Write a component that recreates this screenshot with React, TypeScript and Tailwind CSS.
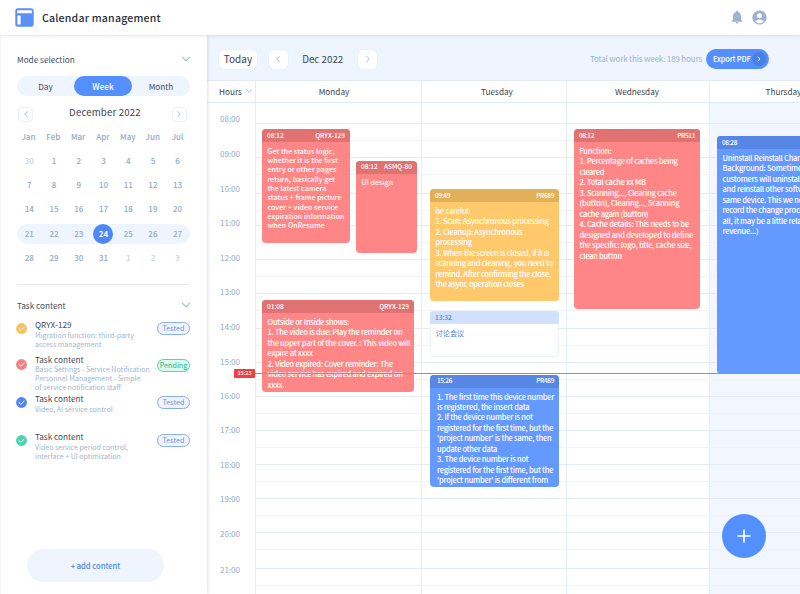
import React from 'react';
import clsx from 'clsx';
import { ChevronDown, ChevronLeft, ChevronRight } from 'lucide-react';
import { MdAccountCircle, MdNotifications } from 'react-icons/md';

type Tone = 'red' | 'yellow' | 'blue' | 'plain';

interface CalendarEvent {
  time: string;
  code?: string;
  lines: string[];
  tone: Tone;
  left: number;
  top: number;
  width: number;
  height: number;
  text: string;
  head?: string;
}

const toneBody: Record<Tone, string> = {
  red: 'bg-[#ff8080]/95 text-white',
  yellow: 'bg-[#ffc563]/95 text-white',
  blue: 'bg-[#5c94ff]/95 text-white',
  plain: 'bg-white text-[#4a84dd] ring-1 ring-inset ring-[#edf2f9]',
};

const toneHead: Record<Tone, string> = {
  red: 'bg-[#e07272]',
  yellow: 'bg-[#e2b05b]',
  blue: 'bg-[#5687e4]',
  plain: 'bg-[#d1e0ff]',
};

const compactText = 'text-[7px] leading-[9.35px] tracking-[0.07px] font-medium pt-[0.5px]';
const bodyText = 'text-[7.5px] leading-[10.45px] tracking-[-0.24px] font-medium';

const weekDays = ['Jan', 'Feb', 'Mar', 'Apr', 'May', 'Jun', 'Jul'];

const weeks = [
  [30, 1, 2, 3, 4, 5, 6],
  [7, 8, 9, 10, 11, 12, 13],
  [14, 15, 16, 17, 18, 19, 20],
  [21, 22, 23, 24, 25, 26, 27],
  [28, 29, 30, 31, 1, 2, 3],
];

const tasks = [
  {
    title: 'QRYX-129',
    lines: ['Migration function: third-party', 'access management'],
    color: 'text-[#f8c160]',
    status: 'Tested',
    row: 'h-[35px]',
    pill: 'mt-[3px]',
    leading: 'leading-[9.5px] pt-px',
  },
  {
    title: 'Task content',
    lines: ['Basic Settings - Service Notification', 'Personnel Management - Simple', 'of service notification staff'],
    color: 'text-[#f58080]',
    status: 'Pending',
    row: 'h-[39px]',
    pill: 'mt-[5px]',
    leading: 'leading-[8.8px]',
  },
  {
    title: 'Task content',
    lines: ['Video, AI service control'],
    color: 'text-[#4f86f0]',
    status: 'Tested',
    row: 'h-[38px]',
    pill: 'mt-[3px]',
    leading: 'leading-[9.5px] pt-px',
  },
  {
    title: 'Task content',
    lines: ['Video service period control,', 'interface + UI optimization'],
    color: 'text-[#49d3b0]',
    status: 'Tested',
    row: 'h-[38px]',
    pill: 'mt-[3px]',
    leading: 'leading-[9.3px] pt-px',
  },
];

const hours = [
  { label: '08:00', y: 119 },
  { label: '09:00', y: 154 },
  { label: '10:00', y: 189 },
  { label: '11:00', y: 223 },
  { label: '12:00', y: 258 },
  { label: '13:00', y: 292 },
  { label: '14:00', y: 327 },
  { label: '15:00', y: 362 },
  { label: '16:00', y: 396 },
  { label: '17:00', y: 430 },
  { label: '18:00', y: 465 },
  { label: '19:00', y: 499 },
  { label: '20:00', y: 534 },
  { label: '21:00', y: 570 },
];

const hourLines = [123, 157, 193, 225, 259, 293, 328, 362, 396, 430, 464, 498, 532, 568];

// top of the scrolling grid in page coordinates
const GRID_TOP = 103;

const days: { name: string; cell: string; column: string; events: CalendarEvent[] }[] = [
  {
    name: 'Monday',
    cell: 'w-[166px] pr-[9px]',
    column: 'w-[166px]',
    events: [
      {
        time: '08:12', code: 'QRYX-129', tone: 'red', left: 7, top: 129, width: 88, height: 114,
        text: compactText,
        lines: ['Get the status logic,', 'whether it is the first', 'entry or other pages', 'return, basically get', 'the latest camera', 'status + frame picture', 'cover + video service', 'expiration information', 'when OnResume'],
      },
      {
        time: '08:12', code: 'ASMQ-80', tone: 'red', left: 101, top: 160.5, width: 61, height: 92,
        text: compactText,
        head: 'px-1',
        lines: ['UI design'],
      },
      {
        time: '01:08', code: 'QRYX-129', tone: 'red', left: 7, top: 300, width: 152, height: 91.5,
        text: bodyText,
        lines: ['Outside or Inside shows:', '1. The video is due: Play the reminder on', 'the upper part of the cover. : This video will', 'expire at xxxx', '2. Video expired: Cover reminder: The', 'video service has expired and expired on', 'xxxx.'],
      },
    ],
  },
  {
    name: 'Tuesday',
    cell: 'w-[145px] pl-1.5',
    column: 'w-[145px]',
    events: [
      {
        time: '09:49', code: 'PR689', tone: 'yellow', left: 9, top: 189, width: 129, height: 112,
        text: bodyText,
        head: 'tracking-[-0.35px]',
        lines: ['be careful:', '1. Scan: Asynchronous processing', '2. Cleanup: Asynchronous', 'processing', '3. When the screen is closed, if it is', 'scanning and cleaning, you need to', 'remind. After confirming the close,', 'the async operation closes'],
      },
      {
        time: '13:32', tone: 'plain', left: 9, top: 311, width: 129, height: 46,
        text: 'text-[7.2px] leading-[10.45px]',
        lines: ['讨论会议'],
      },
      {
        time: '15:26', code: 'PR489', tone: 'blue', left: 9, top: 374.5, width: 129, height: 112,
        text: 'text-[7.5px] leading-[10.45px] tracking-[-0.24px] font-medium pl-[1.5px]',
        head: 'tracking-[-0.35px] pl-[7px]',
        lines: ['1. The first time this device number', 'is registered, the insert data', '2. If the device number is not', 'registered for the first time, but the', "'project number' is the same, then", 'update other data', '3. The device number is not', 'registered for the first time, but the', "'project number' is different from"],
      },
    ],
  },
  {
    name: 'Wednesday',
    cell: 'w-[143px] pr-[2px]',
    column: 'w-[143px]',
    events: [
      {
        time: '08:12', code: 'PR511', tone: 'red', left: 8, top: 129, width: 126, height: 180,
        text: bodyText,
        head: 'tracking-[-0.35px]',
        lines: ['Function:', '1. Percentage of caches being', 'cleared', '2. Total cache xx MB', '3. Scanning..., Clearing cache', '(button), Clearing..., Scanning', 'cache again (button)', '4. Cache details: This needs to be', 'designed and developed to define', 'the specific: logo, title, cache size,', 'clean button'],
      },
    ],
  },
  {
    name: 'Thursday',
    cell: 'w-[145px] pl-[3px]',
    column: 'w-[145px] bg-[#f1f6ff]',
    events: [
      {
        time: '08:28', tone: 'blue', left: 8, top: 136, width: 130, height: 238,
        text: bodyText,
        head: 'tracking-[-0.35px]',
        lines: ['Uninstall Reinstall Changes', 'Background: Sometimes', 'customers will uninstall', 'and reinstall other software', 'same device. This we need', 'record the change process', 'all, it may be a little related', 'revenue...)'],
      },
    ],
  },
];

const CheckDot: React.FC<{ className: string }> = ({ className }) => (
  <svg viewBox="0 0 11 11" className={clsx('size-[11px] shrink-0', className)}>
    <circle cx="5.5" cy="5.5" r="5.4" fill="currentColor" />
    <path d="M3 5.6 L4.9 7.3 L8.1 4.2" fill="none" stroke="#fff" strokeWidth="1" strokeLinecap="round" strokeLinejoin="round" />
  </svg>
);

const Header: React.FC = () => (
  <header className="relative z-20 flex h-[35px] items-center justify-between bg-white pl-[15px] pr-[32px] shadow-[0_1px_3px_rgba(100,130,180,0.2)]">
    <div className="flex items-center">
      <svg viewBox="0 0 19 19" className="size-[19px]">
        <rect x="0.3" y="0.3" width="18.4" height="18.4" rx="2.6" fill="#5a8ff8" />
        <rect x="2.2" y="2.3" width="14.6" height="3" rx="0.3" fill="#fff" />
        <rect x="2.4" y="7.6" width="3.2" height="9" rx="0.3" fill="#fff" />
      </svg>
      <h1 className="ml-2 text-[10.5px] font-medium tracking-[0.22px] text-[#262e3c]">Calendar management</h1>
    </div>
    <div className="flex items-center gap-[6.5px] pb-px text-[#9db3d0]">
      <MdNotifications className="size-4" />
      <MdAccountCircle className="size-[17px]" />
    </div>
  </header>
);

const NavButton: React.FC<{ dir: 'left' | 'right'; className: string; icon: string }> = ({ dir, className, icon }) => {
  const Icon = dir === 'left' ? ChevronLeft : ChevronRight;
  return (
    <button className={clsx('flex items-center justify-center bg-white text-[#9db6d3]', className)}>
      <Icon className={icon} strokeWidth={2.2} />
    </button>
  );
};

const Sidebar: React.FC = () => (
  <aside className="relative z-10 flex w-[207px] shrink-0 flex-col border-l border-[#f4f6f9] bg-white pl-4 pr-[17px] shadow-[1px_0_3px_rgba(100,110,130,0.22)]">
    <div className="mt-[18px] flex h-3 items-center justify-between">
      <span className="text-[8.2px] text-[#434c5b]">Mode selection</span>
      <ChevronDown className="-mr-[3px] size-3.5 text-[#8fabcf]" strokeWidth={1.8} />
    </div>

    <div className="mt-[11px] flex h-5 rounded-full bg-[#eef5ff] text-[8.2px] text-[#434c5b]">
      <button className="w-[57px]">Day</button>
      <button className="w-[58px] rounded-full bg-[#5490fd] font-medium text-white">Week</button>
      <button className="w-[58px]">Month</button>
    </div>

    <div className="mt-2.5 flex h-4 items-center justify-between pl-px pr-[3px]">
      <NavButton dir="left" className="size-[15px] rounded border border-[#edf1f6]" icon="size-2.5" />
      <span className="pb-1 pl-[5px] text-[9.6px] tracking-[0.2px] text-[#3a4352]">December 2022</span>
      <NavButton dir="right" className="size-[15px] rounded border border-[#edf1f6]" icon="size-2.5" />
    </div>

    <div className="mt-[9px] text-[8px] font-medium text-[#93aac5]">
      <div className="-ml-[1px] grid h-[12px] w-[174px] grid-cols-7 items-center text-center">
        {weekDays.map((d) => (
          <span key={d}>{d}</span>
        ))}
      </div>
      <div className="mt-2">
        {weeks.map((week, w) => (
          <div
            key={w}
            className={clsx(
              'mb-[4.2px] grid h-5 w-[173px] grid-cols-7 items-center rounded-full text-center',
              w === 3 && 'bg-[#eef5ff]'
            )}
          >
            {week.map((n, i) => {
              const outside = (w === 0 && i === 0) || (w === 4 && i > 3);
              const active = w === 3 && n === 24;
              return (
                <span
                  key={i}
                  className={clsx(
                    active && 'mx-auto flex size-5 items-center justify-center rounded-full bg-[#4f87f5] font-bold text-white',
                    outside && 'text-[#c9d5e4]'
                  )}
                >
                  {n}
                </span>
              );
            })}
          </div>
        ))}
      </div>
    </div>

    <div className="mt-3 h-px bg-[#e6eaf0]" />

    <div className="mt-3.5 flex h-3 items-center justify-between">
      <span className="text-[8.2px] text-[#434c5b]">Task content</span>
      <ChevronDown className="-mr-[3px] size-3.5 text-[#8fabcf]" strokeWidth={1.8} />
    </div>

    <div className="mt-2">
      {tasks.map((task, i) => (
        <div key={i} className={clsx('flex items-start', task.row)}>
          <CheckDot className={clsx('-ml-[1px]', i === 1 ? 'mt-[5px]' : 'mt-[4px]', task.color)} />
          <div className="ml-2 flex-1 whitespace-nowrap">
            <div className="text-[8.2px] leading-[11px] text-[#434c5b]">{task.title}</div>
            <div className={clsx('text-[7px] text-[#a3b5cb]', task.leading)}>
              {task.lines.map((l) => (
                <div key={l}>{l}</div>
              ))}
            </div>
          </div>
          <span
            className={clsx(
              'flex h-[13px] w-[33px] shrink-0 items-center justify-center rounded-full border text-[7.2px]',
              task.pill,
              task.status === 'Pending'
                ? 'border-[#62cfae] bg-[#d8fbef] text-[#38ab88]'
                : 'border-[#88b0e8] bg-[#edf4ff] text-[#6b98dc]'
            )}
          >
            {task.status}
          </span>
        </div>
      ))}
    </div>

    <button className="absolute bottom-3 left-[26px] h-[33px] w-[137px] rounded-full bg-[#eef5ff] text-[7.6px] font-medium text-[#4f87d6]">
      + add content
    </button>
  </aside>
);

const Toolbar: React.FC = () => (
  <div className="flex h-[45px] shrink-0 items-center bg-[#eef5ff] pl-3 pt-[3px]">
    <button className="h-[19px] w-[38px] rounded-[5px] bg-white pb-0.5 text-[10px] text-[#3a4352] shadow-[0_0_1px_rgba(150,170,200,0.4)]">Today</button>
    <NavButton dir="left" className="ml-[11.5px] size-[19px] rounded-[5px] shadow-[0_0_1px_rgba(150,170,200,0.4)]" icon="size-2.5" />
    <span className="w-[70.5px] whitespace-nowrap text-center text-[9.8px] text-[#3a4352]">Dec 2022</span>
    <NavButton dir="right" className="size-[19px] rounded-[5px] shadow-[0_0_1px_rgba(150,170,200,0.4)]" icon="size-2.5" />
    <span className="ml-auto text-[8px] tracking-[-0.15px] text-[#9db1cb]">Total work this week: 189 hours</span>
    <button className="ml-1 mr-[31px] flex h-5 w-[63px] items-center justify-between whitespace-nowrap rounded-full bg-[#5490fd] pl-[7px] pr-[3px] text-[7.5px] font-medium tracking-[-0.2px] text-white">
      Export PDF
      <span className="flex size-3.5 shrink-0 items-center justify-center rounded-full bg-[#4680ea]">
        <ChevronRight className="size-2" strokeWidth={3} />
      </span>
    </button>
  </div>
);

const EventCard: React.FC<{ event: CalendarEvent }> = ({ event }) => (
  <div
    className={clsx('absolute overflow-hidden rounded-[4px]', toneBody[event.tone])}
    style={{ left: event.left, top: event.top - GRID_TOP, width: event.width, height: event.height }}
  >
    <div className={clsx('flex h-[13px] items-center justify-between px-[5px] text-[6.5px] font-medium', toneHead[event.tone], event.head)}>
      <span>{event.time}</span>
      <span>{event.code}</span>
    </div>
    <div className="whitespace-nowrap px-[5.5px] pt-1">
      <div className={event.text}>
        {event.lines.map((line, i) => (
          <div key={i}>{line}</div>
        ))}
      </div>
    </div>
  </div>
);

const WeekGrid: React.FC = () => (
  <div className="relative flex-1 overflow-hidden bg-white">
    <div className="flex h-full">
      <div className="relative w-12 shrink-0">
        {hours.map((h) => (
          <span
            key={h.label}
            className="absolute left-[13px] text-[8px] leading-3 text-[#93aac5]"
            style={{ top: h.y - GRID_TOP - 6 }}
          >
            {h.label}
          </span>
        ))}
      </div>
      <div className="relative flex">
        {days.map((day) => (
          <div key={day.name} className={clsx('shrink-0 border-l border-[#e6edf5]', day.column)} />
        ))}
        {hourLines.map((y) => (
          <React.Fragment key={y}>
            <div className="absolute inset-x-0 h-px bg-[#e4ebf3]" style={{ top: y - GRID_TOP }} />
            <div className="absolute inset-x-0 h-px bg-[#f0f4f9]" style={{ top: y - GRID_TOP + 17 }} />
          </React.Fragment>
        ))}
        <div className="absolute inset-0 flex">
          {days.map((day) => (
            <div key={day.name} className={clsx('relative shrink-0', day.cell)}>
              {day.events.map((event) => (
                <EventCard key={event.time + event.left} event={event} />
              ))}
            </div>
          ))}
        </div>
      </div>
    </div>

    {/* current time marker */}
    <div className="absolute left-[27px] right-0 top-[266px] flex items-center">
      <span className="flex h-[9px] w-[21px] items-center justify-center rounded-[1px] bg-[#ef3f3f] text-[5.5px] font-medium text-white">15:23</span>
      <div className="h-px flex-1 bg-[#f26b6b]" />
    </div>
  </div>
);

const App: React.FC = () => (
  <div className="flex h-[594px] w-[800px] flex-col overflow-hidden bg-white font-['Noto_Sans_CJK_SC',sans-serif]">
    <Header />
    <div className="flex min-h-0 flex-1">
      <Sidebar />
      <main className="relative flex min-w-0 flex-1 flex-col overflow-hidden">
        <Toolbar />
        <div className="flex h-[23px] shrink-0 items-center border-y border-[#e2eaf4] bg-white text-[8.2px] text-[#3a4352]">
          <div className="flex w-12 shrink-0 items-center gap-[2px] pl-3">
            Hours
            <ChevronDown className="size-2.5 shrink-0 text-[#8fabcf]" />
          </div>
          {days.map((day) => (
            <div key={day.name} className={clsx('flex h-full shrink-0 items-center justify-center border-l border-[#e6edf5]', day.cell)}>
              {day.name}
            </div>
          ))}
        </div>
        <WeekGrid />
        <button className="absolute bottom-9 right-[34px] flex size-11 items-center justify-center rounded-full bg-[#5490fd]" aria-label="Add">
          <svg viewBox="0 0 14 14" className="size-3.5">
            <path d="M7 0.5 V13.5 M0.5 7 H13.5" stroke="#fff" strokeWidth="1.7" />
          </svg>
        </button>
      </main>
    </div>
  </div>
);

export default App;
